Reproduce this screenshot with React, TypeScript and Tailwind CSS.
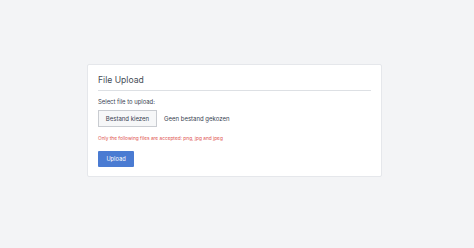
export default function App() {
  return (
    <div className="min-h-[248px] w-full bg-[#f3f4f6] pt-[64px] pl-[87px]" style={{ fontFamily: 'Inter, "Liberation Sans", sans-serif' }}>
      <div className="w-[295px] rounded-[2px] border border-[#e5e7eb] bg-white px-[10px] pt-[9px] pb-[9px]">
        <h2 className="border-b border-[#dde0e4] pb-[3px] text-[8.6px] leading-[13px] text-[#454c56]">File Upload</h2>
        <p className="mt-[6px] text-[5.9px] leading-[9px] text-[#374151]">Select file to upload:</p>
        <div className="mt-[4px] flex items-center gap-[7px]">
          <button className="h-[17px] w-[59px] border border-[#c9ccd1] bg-[#f6f7f8] text-[6px] text-[#374151]">Bestand kiezen</button>
          <span className="text-[6px] text-[#374151]">Geen bestand gekozen</span>
        </div>
        <p className="mt-[7px] text-[4.8px] leading-[8px] text-[#e0524f]">Only the following files are accepted: png, jpg and jpeg</p>
        <button className="mt-[9px] h-[16px] w-[36px] rounded-[1px] bg-[#4a7bd2] text-[5.7px] text-white">Upload</button>
      </div>
    </div>
  );
}
